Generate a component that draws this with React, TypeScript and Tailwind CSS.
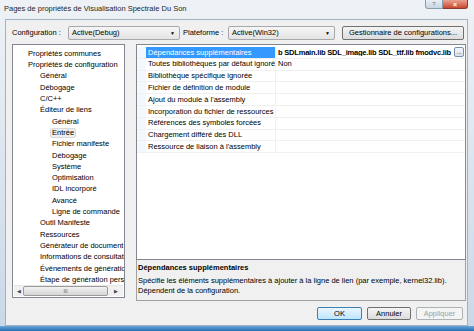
import React from "react";

const tree: [string, number, boolean?][] = [
  ["Propriétés communes", 0],
  ["Propriétés de configuration", 0],
  ["Général", 1],
  ["Débogage", 1],
  ["C/C++", 1],
  ["Éditeur de liens", 1],
  ["Général", 2],
  ["Entrée", 2, true],
  ["Fichier manifeste", 2],
  ["Débogage", 2],
  ["Système", 2],
  ["Optimisation", 2],
  ["IDL incorporé", 2],
  ["Avancé", 2],
  ["Ligne de commande", 2],
  ["Outil Manifeste", 1],
  ["Ressources", 1],
  ["Générateur de document XML", 1],
  ["Informations de consultation", 1],
  ["Événements de génération", 1],
  ["Étape de génération personnalisée", 1],
];

const props: [string, string][] = [
  ["Dépendances supplémentaires", "b SDLmain.lib SDL_image.lib SDL_ttf.lib fmodvc.lib"],
  ["Toutes bibliothèques par défaut ignorées", "Non"],
  ["Bibliothèque spécifique ignorée", ""],
  ["Fichier de définition de module", ""],
  ["Ajout du module à l'assembly", ""],
  ["Incorporation du fichier de ressources managées", ""],
  ["Références des symboles forcées", ""],
  ["Chargement différé des DLL", ""],
  ["Ressource de liaison à l'assembly", ""],
];

function Combo({ text, w }: { text: string; w: string }) {
  return (
    <div
      className={`${w} h-[14px] flex items-center justify-between pl-[3px] pr-[4px] border border-[#a7a9ad] rounded-[2px] bg-gradient-to-b from-[#f6f6f6] to-[#e4e4e4]`}
    >
      <span>{text}</span>
      <span className="text-[5px] leading-none">▼</span>
    </div>
  );
}

export default function App() {
  return (
    <div className="w-[474px] h-[331px] overflow-hidden flex flex-col bg-gradient-to-b from-[#eef2f6] to-[#c9d8e8] font-['Liberation_Sans',sans-serif] text-[7.5px] text-black leading-none">
      {/* Title bar */}
      <div className="h-[19px] shrink-0 flex items-start justify-between">
        <div className="pl-[4px] pt-[5px] text-[7.5px] text-[#1e1e1e]">
          Pages de propriétés de Visualisation Spectrale Du Son
        </div>
        <div className="flex mr-[6px]">
          <div className="w-[18px] h-[9px] rounded-bl-[3px] border border-t-0 border-[#8a9cb0] bg-gradient-to-b from-[#e8eef5] to-[#c9d6e4] flex items-center justify-center text-[6px] text-[#6b7a8c]">
            ?
          </div>
          <div className="w-[25px] h-[9px] rounded-br-[3px] border border-t-0 border-l-0 border-[#8a3a30] bg-gradient-to-b from-[#e8a08f] to-[#c8462f] flex items-center justify-center text-[7px] text-white font-bold">
            ×
          </div>
        </div>
      </div>

      {/* Client area */}
      <div className="ml-[5px] mr-[6px] h-[307px] shrink-0 bg-[#f0f0f0] border border-[#9fb2c6] flex flex-col pl-[6px] pr-[1px]">
        {/* Top row */}
        <div className="flex items-center mt-[6px] h-[14px]">
          <span className="w-[56px]">Configuration :</span>
          <Combo text="Active(Debug)" w="w-[112px]" />
          <span className="ml-[3px] w-[45px]">Plateforme :</span>
          <Combo text="Active(Win32)" w="w-[107px]" />
          <div className="ml-[7px] w-[122px] h-[14px] flex items-center justify-center border border-[#707070] rounded-[2px] bg-gradient-to-b from-[#f4f4f4] to-[#dcdcdc]">
            Gestionnaire de configurations...
          </div>
        </div>

        {/* Main area */}
        <div className="flex mt-[4px] h-[257px]">
          {/* Tree */}
          <div className="w-[113px] h-[254px] bg-white border border-[#828790] flex flex-col justify-between overflow-hidden">
            <div className="pt-[3px]">
              {tree.map(([t, lvl, sel], i) => (
                <div
                  key={i}
                  className={`h-[11.3px] flex items-center whitespace-nowrap ${
                    lvl === 0 ? "pl-[15px]" : lvl === 1 ? "pl-[27px]" : "pl-[39px]"
                  }`}
                >
                  <span
                    className={
                      sel
                        ? "bg-[#eeeeee] border border-[#d9d9d9] rounded-[2px] px-[1px] -ml-[2px] h-[10px] flex items-center"
                        : ""
                    }
                  >
                    {t}
                  </span>
                </div>
              ))}
            </div>
            <div className="h-[12px] mx-[1px] mb-[1px] flex items-center bg-[#f0f0f0] border-t border-[#e6e6e6]">
              <div className="w-[9px] text-center text-[5px] text-[#444]">◀</div>
              <div className="w-[85px] h-[10px] border border-[#9a9a9a] rounded-[2px] bg-gradient-to-b from-[#f2f2f2] to-[#d6d6d6] flex items-center justify-center text-[5px] text-[#555]">
                III
              </div>
              <div className="flex-1 text-center text-[5px] text-[#444]">▶</div>
            </div>
          </div>

          {/* Right panel */}
          <div className="ml-[11px] w-[330px] flex flex-col">
            <div className="h-[216px] bg-white border border-[#828790] pt-[2px] overflow-hidden">
              {props.map(([n, v], i) => (
                <div key={i} className="h-[11.8px] flex border-b border-[#f0f0f0]">
                  <div className="w-[9px] shrink-0 bg-[#f4f7fb]" />
                  <div
                    className={`w-[130px] shrink-0 pl-[2px] flex items-center whitespace-nowrap overflow-hidden border-r border-[#f0f0f0] ${
                      i === 0 ? "bg-[#3399ff] text-white" : ""
                    }`}
                  >
                    {n}
                  </div>
                  <div className="flex-1 flex items-center pl-[2px] whitespace-nowrap overflow-hidden">
                    {i === 0 ? (
                      <>
                        <span className="font-bold flex-1 overflow-hidden tracking-[-0.2px]">{v}</span>
                        <div className="w-[10px] h-[10px] mr-[1px] border border-[#7a8ea5] rounded-[2px] bg-gradient-to-b from-[#f4f8fc] to-[#d7e2ee] flex items-end justify-center text-[6px] leading-[6px] pb-[1px]">
                          ...
                        </div>
                      </>
                    ) : (
                      <span>{v}</span>
                    )}
                  </div>
                </div>
              ))}
            </div>
            <div className="h-[41px] border border-t-0 border-[#a0a0a0] pl-[1px] pt-[4px]">
              <div className="font-bold">Dépendances supplémentaires</div>
              <div className="mt-[5px]">
                Spécifie les éléments supplémentaires à ajouter à la ligne de lien (par exemple, kernel32.lib).
              </div>
              <div className="mt-[3px]">Dépendent de la configuration.</div>
            </div>
          </div>
        </div>

        {/* Buttons */}
        <div className="flex justify-end gap-[5px] mt-[6px] pr-[3px]">
          <div className="w-[45px] h-[13px] flex items-center justify-center border border-[#3c7fb1] rounded-[2px] bg-gradient-to-b from-[#eaf6fd] to-[#bee6fd]">
            OK
          </div>
          <div className="w-[44px] h-[13px] flex items-center justify-center border border-[#707070] rounded-[2px] bg-gradient-to-b from-[#f4f4f4] to-[#dcdcdc]">
            Annuler
          </div>
          <div className="w-[47px] h-[13px] flex items-center justify-center border border-[#adb2b5] rounded-[2px] bg-[#f4f4f4] text-[#a0a0a0]">
            Appliquer
          </div>
        </div>
      </div>

      {/* Bottom band */}
      <div className="flex-1 bg-gradient-to-b from-[#6aa5d6] to-[#1f6fb4]" />
    </div>
  );
}
